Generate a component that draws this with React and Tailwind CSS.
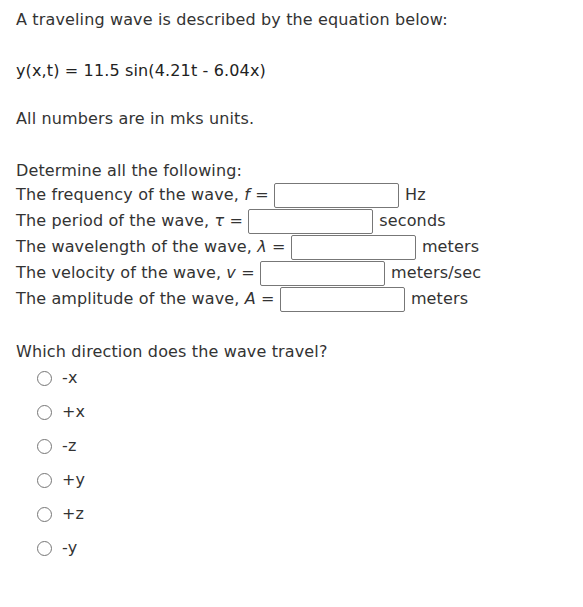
import React from 'react';

const rows = [
  { label: 'The frequency of the wave, ', sym: 'f', unit: 'Hz' },
  { label: 'The period of the wave, ', sym: 'τ', unit: 'seconds' },
  { label: 'The wavelength of the wave, ', sym: 'λ', unit: 'meters' },
  { label: 'The velocity of the wave, ', sym: 'v', unit: 'meters/sec' },
  { label: 'The amplitude of the wave, ', sym: 'A', unit: 'meters' },
];

const options = ['-x', '+x', '-z', '+y', '+z', '-y'];

const App = () => {
  return (
    <div className="min-h-[607px] bg-white px-4 pt-[7px] text-[16px] leading-[26px] tracking-[0.14px] text-[#333] font-['Verdana','DejaVu_Sans',sans-serif]">
      <p>A traveling wave is described by the equation below:</p>
      <p className="mt-[25px] text-[#222]">y(x,t) = 11.5 sin(4.21t - 6.04x)</p>
      <p className="mt-[22px]">All numbers are in mks units.</p>

      <div className="mt-[26px]">
        <p>Determine all the following:</p>
        <div className="-mt-[2px]">
          {rows.map((r) => (
            <div key={r.unit + r.sym} className="flex items-center h-[26px]">
              <span className="whitespace-pre">{r.label}</span>
              <span className="italic">{r.sym}</span>
              <span className="whitespace-pre"> = </span>
              <input
                type="text"
                className="w-[125px] h-[25px] border border-[#777] rounded-[2px] bg-white outline-none"
              />
              <span className="ml-[6px]">{r.unit}</span>
            </div>
          ))}
        </div>
      </div>

      <p className="mt-[27px]">Which direction does the wave travel?</p>
      <div className="pl-[21px] flex flex-col gap-[8px]">
        {options.map((o) => (
          <label key={o} className="flex items-center h-[26px]">
            <span className="w-[15px] h-[15px] rounded-full border border-[#767676] bg-white shrink-0" />
            <span className="ml-[10px]">{o}</span>
          </label>
        ))}
      </div>
    </div>
  );
};

export default App;
